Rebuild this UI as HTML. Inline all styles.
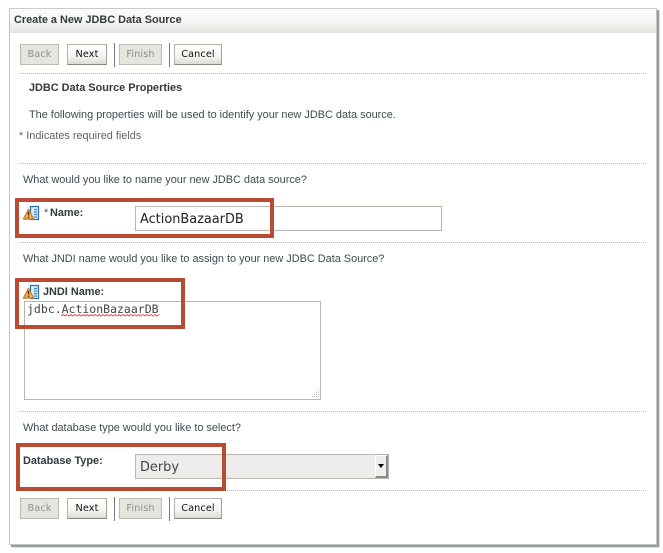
<!DOCTYPE html>
<html><head><meta charset="utf-8">
<style>
html,body{margin:0;padding:0;background:#fff}
body{width:663px;height:553px;position:relative;overflow:hidden;font-family:"Liberation Sans",sans-serif;color:#3c4446}
.a{position:absolute;white-space:nowrap}
.t{font-size:10.900px;line-height:13px;color:#414b4e;margin-top:1px}
.b{font-weight:bold;color:#33393c}
.dot{position:absolute;left:19px;width:627px;height:0;border-top:1px dotted #bcbcbc}
.btn{position:absolute;height:21px;box-sizing:border-box;border:1px solid #b3b5ab;font:9.700px/20px "DejaVu Sans",sans-serif;letter-spacing:.1px;text-align:center;color:#111;background:linear-gradient(#fff,#f4f4f0 60%,#dcdcd6);border-bottom:1px solid #85877f;border-right-color:#a0a298}
.dis{background:#e4e5df;color:#8e908a;border-color:#b9bab2}
.sep{position:absolute;width:1px;height:24px;background:#77797a}
.red{position:absolute;box-sizing:border-box;border:4px solid #bb4a33}
</style></head><body>
<div class="a" style="left:9px;top:8px;width:648px;height:537px;box-sizing:border-box;border:1px solid #c0c4c2;border-top-color:#c6cccc;background:#fff;box-shadow:2px 2px 0 #9a9c9c,3px 3px 1px #d8d8d8"></div>
<div class="a" style="left:10px;top:9px;width:646px;height:23px;background:linear-gradient(#fbfbfb,#f5f6f5 55%,#e4e6e3);border-bottom:1px solid #e0e2df"></div>
<div class="a b" style="left:14px;top:14px;font-size:10.900px;line-height:13px">Create a New JDBC Data Source</div>

<div class="btn dis" style="left:20px;top:44px;width:39px">Back</div>
<div class="btn" style="left:67px;top:44px;width:40px">Next</div>
<div class="sep" style="left:114px;top:43px"></div>
<div class="btn dis" style="left:119px;top:44px;width:43px">Finish</div>
<div class="sep" style="left:169px;top:43px"></div>
<div class="btn" style="left:174px;top:44px;width:48px">Cancel</div>

<div class="dot" style="top:73px"></div>
<div class="a t b" style="left:29px;top:81px">JDBC Data Source Properties</div>
<div class="a t" style="left:29px;top:108px">The following properties will be used to identify your new JDBC data source.</div>
<div class="a t" style="left:19px;top:129px;color:#5d6466">* Indicates required fields</div>

<div class="dot" style="top:163px"></div>
<div class="a t" style="left:23px;top:173px">What would you like to name your new JDBC data source?</div>

<svg class="a" style="left:23px;top:205px" width="17" height="17" viewBox="0 0 17 17"><rect x="7.500" y="1.500" width="8" height="13" fill="#d6ebf8" stroke="#2a6fa8" stroke-width="1.200"/><path d="M11 4.500h3M11 7h3M11 9.500h3M11 12h3" stroke="#3f87bf" stroke-width="1.200"/><path d="M5.500 4.500 L10.500 14 H0.500 Z" fill="#f8b452" stroke="#c87f2c" stroke-width="1.400" stroke-linejoin="round"/><path d="M5.500 7v3.500M5.500 11.500v1.500" stroke="#4a3010" stroke-width="1.300"/></svg>
<div class="a t" style="left:44px;top:206px;color:#555">*</div>
<div class="a t b" style="left:50px;top:206px">Name:</div>
<div class="a" style="left:135px;top:206px;width:307px;height:25px;box-sizing:border-box;border:1px solid #b6b8ae;background:#fff;font:12.900px/25px 'DejaVu Sans',sans-serif;color:#222;padding-left:4px">ActionBazaarDB</div>

<div class="dot" style="top:242px"></div>
<div class="a t" style="left:23px;top:252px">What JNDI name would you like to assign to your new JDBC Data Source?</div>

<svg class="a" style="left:23px;top:284px" width="17" height="17" viewBox="0 0 17 17"><rect x="7.500" y="1.500" width="8" height="13" fill="#d6ebf8" stroke="#2a6fa8" stroke-width="1.200"/><path d="M11 4.500h3M11 7h3M11 9.500h3M11 12h3" stroke="#3f87bf" stroke-width="1.200"/><path d="M5.500 4.500 L10.500 14 H0.500 Z" fill="#f8b452" stroke="#c87f2c" stroke-width="1.400" stroke-linejoin="round"/><path d="M5.500 7v3.500M5.500 11.500v1.500" stroke="#4a3010" stroke-width="1.300"/></svg>
<div class="a t b" style="left:43px;top:285px">JNDI Name:</div>
<div class="a" style="left:24px;top:301px;width:297px;height:99px;box-sizing:border-box;border:1px solid #b6b8ae;background:#fff"></div>
<div class="a" style="left:27px;top:302px;font:11.500px/15px 'DejaVu Sans Mono',monospace;color:#444">jdbc.ActionBazaarDB</div>
<svg class="a" style="left:61px;top:314px" width="98" height="3" viewBox="0 0 98 3"><path d="M0 2 L2 0.500 L4 2 L6 0.500 L8 2 L10 0.500 L12 2 L14 0.500 L16 2 L18 0.500 L20 2 L22 0.500 L24 2 L26 0.500 L28 2 L30 0.500 L32 2 L34 0.500 L36 2 L38 0.500 L40 2 L42 0.500 L44 2 L46 0.500 L48 2 L50 0.500 L52 2 L54 0.500 L56 2 L58 0.500 L60 2 L62 0.500 L64 2 L66 0.500 L68 2 L70 0.500 L72 2 L74 0.500 L76 2 L78 0.500 L80 2 L82 0.500 L84 2 L86 0.500 L88 2 L90 0.500 L92 2 L94 0.500 L96 2 L98 0.500" fill="none" stroke="#d9534a" stroke-width="0.900"/></svg>
<svg class="a" style="left:310px;top:389px" width="10" height="10" viewBox="0 0 10 10"><path d="M8 1h1v1H8zM6 3h1v1H6zM8 3h1v1H8zM4 5h1v1H4zM6 5h1v1H6zM8 5h1v1H8zM2 7h1v1H2zM4 7h1v1H4zM6 7h1v1H6zM8 7h1v1H8z" fill="#bbb"/></svg>

<div class="dot" style="top:411px"></div>
<div class="a t" style="left:23px;top:421px">What database type would you like to select?</div>
<div class="a t b" style="left:23px;top:454px">Database Type:</div>
<div class="a" style="left:135px;top:454px;width:254px;height:25px;box-sizing:border-box;border:1px solid #b6b8ae;background:#ececec;font:12.900px/25px 'DejaVu Sans',sans-serif;color:#444;padding-left:4px">Derby</div>
<div class="a" style="left:375px;top:455px;width:13px;height:23px;box-sizing:border-box;background:#eeeeee;border-right:2px solid #8a8a8a;border-bottom:2px solid #8a8a8a;border-left:1px solid #fff;border-top:1px solid #fff"></div>
<div class="a" style="left:378px;top:464px;width:0;height:0;border-left:3.500px solid transparent;border-right:3.500px solid transparent;border-top:4px solid #000"></div>

<div class="dot" style="top:490px"></div>
<div class="btn dis" style="left:20px;top:498px;width:39px">Back</div>
<div class="btn" style="left:67px;top:498px;width:40px">Next</div>
<div class="sep" style="left:114px;top:497px"></div>
<div class="btn dis" style="left:119px;top:498px;width:43px">Finish</div>
<div class="sep" style="left:169px;top:497px"></div>
<div class="btn" style="left:174px;top:498px;width:48px">Cancel</div>

<div class="red" style="left:15px;top:198px;width:259px;height:40px"></div>
<div class="red" style="left:15px;top:278px;width:170px;height:51px"></div>
<div class="red" style="left:16px;top:443px;width:210px;height:48px"></div>
</body></html>
